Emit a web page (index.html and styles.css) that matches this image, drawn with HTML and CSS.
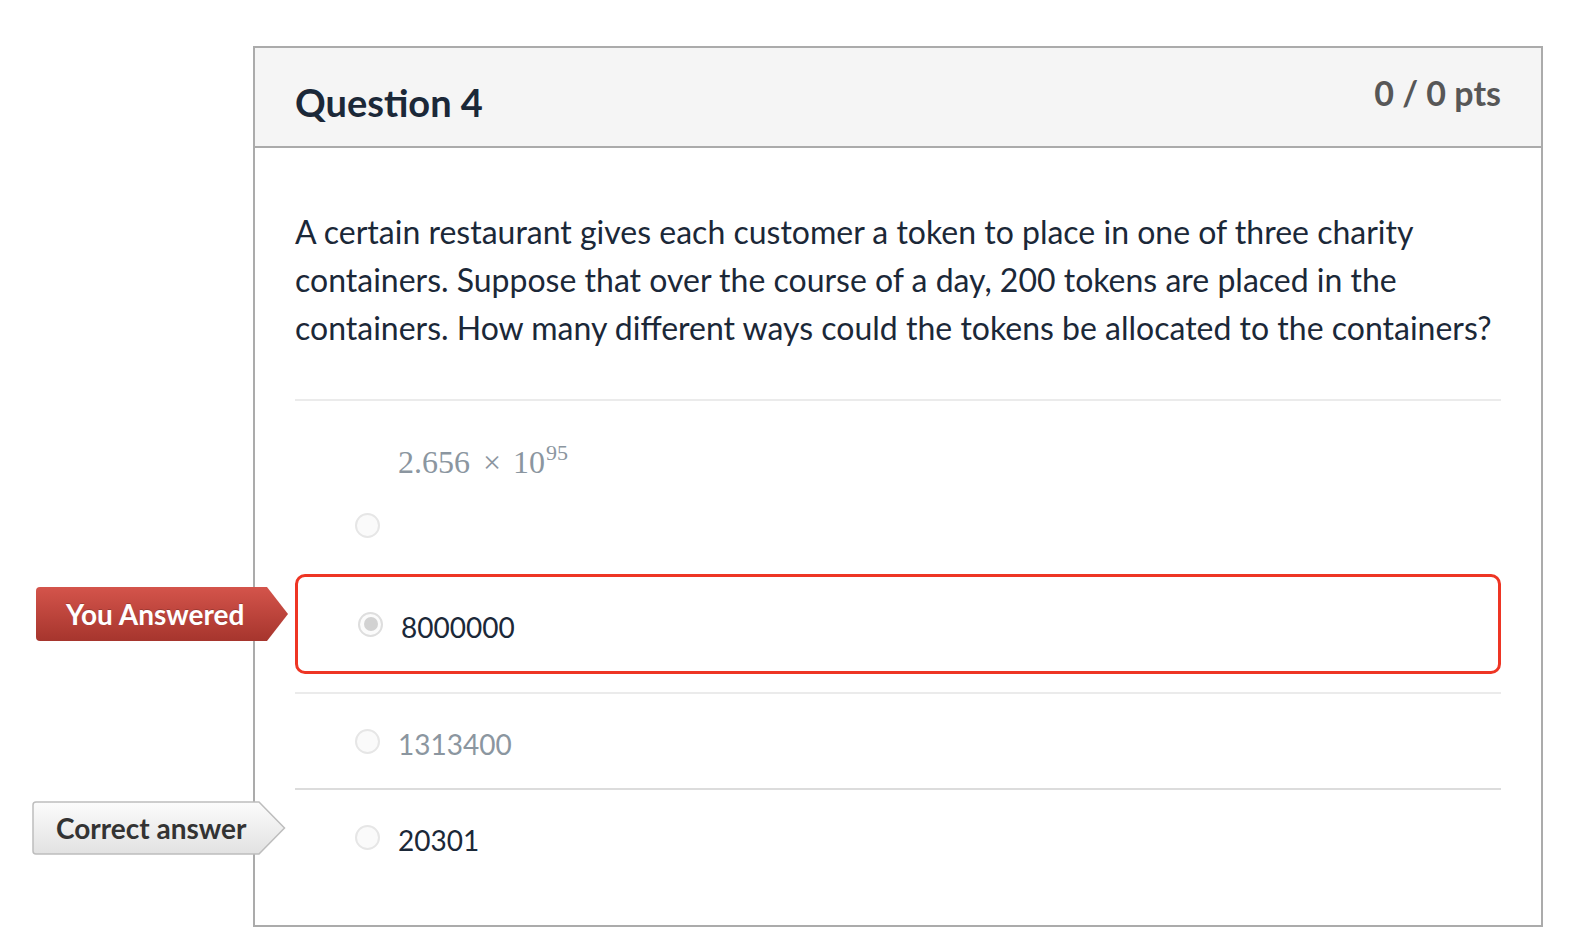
FILE: index.html
```html
<!DOCTYPE html>
<html lang="en">
<head>
<meta charset="utf-8">
<title>Question 4</title>
<link rel="stylesheet" href="styles.css">
</head>
<body>
<div class="question">
  <div class="q-header">
    <h2 class="q-title">Question 4</h2>
    <div class="q-points">0 / 0 pts</div>
  </div>
  <div class="q-body">
    <p class="q-text">A certain restaurant gives each customer a token to place in one of three charity containers. Suppose that over the course of a day, 200 tokens are placed in the containers. How many different ways could the tokens be allocated to the containers?</p>
    <div class="answers">
      <div class="answer answer-math">
        <div class="math"><span>2.656</span><span class="times">×</span><span>10</span><sup class="sup">95</sup></div>
        <div class="answer-row"><span class="radio"></span></div>
      </div>
      <div class="answer answer-wrong">
        <div class="answer-row"><span class="radio radio-checked"></span><span class="label dark">8000000</span></div>
      </div>
      <div class="answer answer-sep">
        <div class="answer-row"><span class="radio"></span><span class="label muted">1313400</span></div>
      </div>
      <div class="answer answer-sep answer-sep-dark">
        <div class="answer-row"><span class="radio"></span><span class="label dark">20301</span></div>
      </div>
    </div>
  </div>
  <div class="badge badge-wrong">You Answered</div>
  <div class="badge badge-correct">
    <svg class="badge-shape" width="254" height="54" viewBox="0 0 254 54" aria-hidden="true">
      <defs>
        <linearGradient id="cg" x1="0" y1="0" x2="0" y2="1">
          <stop offset="0" stop-color="#fcfcfc"/>
          <stop offset="1" stop-color="#e2e2e2"/>
        </linearGradient>
      </defs>
      <path d="M4 1 H227 L252.5 27 L227 53 H4 Q1 53 1 50 V4 Q1 1 4 1 Z" fill="url(#cg)" stroke="#bdbdbd" stroke-width="1.5"/>
    </svg>
    <span class="badge-text">Correct answer</span>
  </div>
</div>
</body>
</html>
```
FILE: styles.css
```css
* { box-sizing: border-box; }
html, body { margin: 0; padding: 0; background: #ffffff; }
body { font-family: Lato, "Noto Sans", sans-serif; color: #1b2838; }

.question {
  position: relative;
  width: 1290px;
  margin: 46px 0 0 253px;
  border: 2px solid #ababab;
  background: #fff;
}

.q-header {
  display: flex;
  justify-content: space-between;
  align-items: flex-start;
  height: 100px;
  padding: 0 40px;
  background: #f5f5f5;
  border-bottom: 2px solid #ababab;
}
.q-title {
  margin: 30px 0 0;
  font-size: 38px;
  line-height: 48px;
  font-weight: 700;
  color: #1b2838;
}
.q-points {
  margin-top: 25px;
  font-size: 34px;
  line-height: 40px;
  font-weight: 700;
  color: #575757;
}

.q-body { padding: 60px 40px 41px; }
.q-text {
  margin: 0 0 47px;
  font-size: 32px;
  line-height: 48px;
  color: #1b2838;
}

.answers { border-top: 2px solid #ebebeb; }

.answer-row {
  display: flex;
  align-items: center;
  height: 48px;
}
.radio {
  flex: none;
  width: 25px;
  height: 25px;
  margin-left: 60px;
  border-radius: 50%;
  border: 2px solid #e6e6e6;
  background: #fafafa;
}
.radio-checked {
  position: relative;
  border-color: #dedede;
  background: #fbfbfb;
}
.radio-checked::after {
  content: "";
  position: absolute;
  left: 3.5px;
  top: 3.5px;
  width: 14px;
  height: 14px;
  border-radius: 50%;
  background: #d2d2d2;
}
.label {
  margin-left: 18px;
  padding-top: 6px;
  font-size: 28px;
  line-height: 48px;
}
.dark { color: #1b2838; }
.muted { color: #8b96a0; }

.answer-math { padding-bottom: 24px; }
.math {
  height: 85px;
  padding: 37px 0 0 103px;
  margin-bottom: 15px;
  font-family: "Liberation Serif", "DejaVu Serif", serif;
  font-size: 32px;
  line-height: 48px;
  color: #8b96a0;
}
.times { margin: 0 12px 0 13px; }
.sup { font-size: 22px; line-height: 0; vertical-align: 0; position: relative; top: -13px; margin-left: 1px; }

.answer-wrong {
  margin-top: 1px;
  padding: 23px 0;
  border: 3px solid #ee3524;
  border-radius: 10px;
}

.answer-sep {
  margin-top: 18px;
  padding: 23px 0;
  border-top: 2px solid #ebebeb;
}
.answer-sep-dark {
  margin-top: 0;
  border-top-color: #dcdcdc;
}

.badge {
  position: absolute;
  display: flex;
  align-items: center;
  font-weight: 700;
  font-size: 28px;
}
.badge-wrong {
  left: -219px;
  top: 539px;
  width: 252px;
  height: 54px;
  padding-left: 30px;
  color: #ffffff;
  background: linear-gradient(#d4544b, #a6352d);
  border-radius: 4px 0 0 4px;
  clip-path: polygon(0 0, calc(100% - 21px) 0, 100% 50%, calc(100% - 21px) 100%, 0 100%);
  text-shadow: 0 -1px 0 rgba(0,0,0,0.2);
}
.badge-correct {
  left: -223px;
  top: 753px;
  width: 254px;
  height: 54px;
  padding-left: 24px;
  color: #333333;
}
.badge-shape { position: absolute; left: 0; top: 0; }
.badge-text { position: relative; }
```
